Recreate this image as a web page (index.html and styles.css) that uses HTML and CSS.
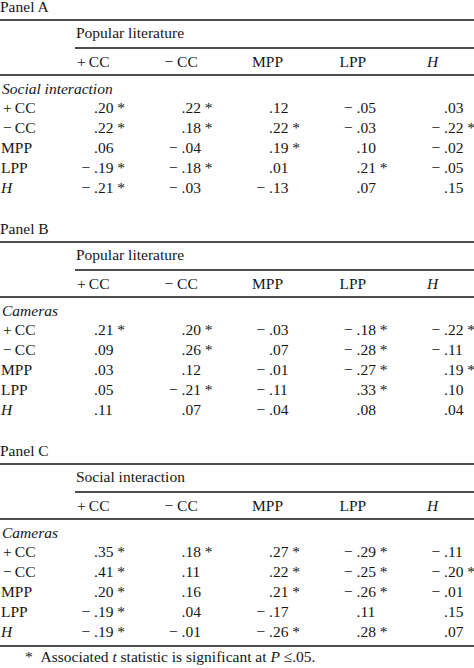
FILE: index.html
```html
<!DOCTYPE html>
<html>
<head>
<meta charset="utf-8">
<link rel="stylesheet" href="styles.css">
</head>
<body>
<section class="panel">
  <div class="panel-label">Panel A</div>
  <div class="table">
    <div class="head1"><div></div><div class="group-head">Popular literature</div></div>
    <div class="head2 grid">
      <div></div><div class="ch">+&thinsp;CC</div><div class="ch">− CC</div><div class="ch">MPP</div><div class="ch">LPP</div><div class="ch"><i>H</i></div>
    </div>
    <div class="tbody">
      <div class="group-label">Social interaction</div>
      <div class="row grid"><div class="rl pm">+&thinsp;CC</div><div class="v"><span class="s"></span><span>.20 *</span></div><div class="v"><span class="s"></span><span>.22 *</span></div><div class="v"><span class="s"></span><span>.12</span></div><div class="v"><span class="s">− </span><span>.05</span></div><div class="v"><span class="s"></span><span>.03</span></div></div>
      <div class="row grid"><div class="rl pm">−&thinsp;CC</div><div class="v"><span class="s"></span><span>.22 *</span></div><div class="v"><span class="s"></span><span>.18 *</span></div><div class="v"><span class="s"></span><span>.22 *</span></div><div class="v"><span class="s">− </span><span>.03</span></div><div class="v"><span class="s">− </span><span>.22 *</span></div></div>
      <div class="row grid"><div class="rl">MPP</div><div class="v"><span class="s"></span><span>.06</span></div><div class="v"><span class="s">− </span><span>.04</span></div><div class="v"><span class="s"></span><span>.19 *</span></div><div class="v"><span class="s"></span><span>.10</span></div><div class="v"><span class="s">− </span><span>.02</span></div></div>
      <div class="row grid"><div class="rl">LPP</div><div class="v"><span class="s">− </span><span>.19 *</span></div><div class="v"><span class="s">− </span><span>.18 *</span></div><div class="v"><span class="s"></span><span>.01</span></div><div class="v"><span class="s"></span><span>.21 *</span></div><div class="v"><span class="s">− </span><span>.05</span></div></div>
      <div class="row grid"><div class="rl"><i>H</i></div><div class="v"><span class="s">− </span><span>.21 *</span></div><div class="v"><span class="s">− </span><span>.03</span></div><div class="v"><span class="s">− </span><span>.13</span></div><div class="v"><span class="s"></span><span>.07</span></div><div class="v"><span class="s"></span><span>.15</span></div></div>
    </div>
  </div>
</section>

<section class="panel">
  <div class="panel-label">Panel B</div>
  <div class="table">
    <div class="head1"><div></div><div class="group-head">Popular literature</div></div>
    <div class="head2 grid">
      <div></div><div class="ch">+&thinsp;CC</div><div class="ch">− CC</div><div class="ch">MPP</div><div class="ch">LPP</div><div class="ch"><i>H</i></div>
    </div>
    <div class="tbody">
      <div class="group-label">Cameras</div>
      <div class="row grid"><div class="rl pm">+&thinsp;CC</div><div class="v"><span class="s"></span><span>.21 *</span></div><div class="v"><span class="s"></span><span>.20 *</span></div><div class="v"><span class="s">− </span><span>.03</span></div><div class="v"><span class="s">− </span><span>.18 *</span></div><div class="v"><span class="s">− </span><span>.22 *</span></div></div>
      <div class="row grid"><div class="rl pm">−&thinsp;CC</div><div class="v"><span class="s"></span><span>.09</span></div><div class="v"><span class="s"></span><span>.26 *</span></div><div class="v"><span class="s"></span><span>.07</span></div><div class="v"><span class="s">− </span><span>.28 *</span></div><div class="v"><span class="s">− </span><span>.11</span></div></div>
      <div class="row grid"><div class="rl">MPP</div><div class="v"><span class="s"></span><span>.03</span></div><div class="v"><span class="s"></span><span>.12</span></div><div class="v"><span class="s">− </span><span>.01</span></div><div class="v"><span class="s">− </span><span>.27 *</span></div><div class="v"><span class="s"></span><span>.19 *</span></div></div>
      <div class="row grid"><div class="rl">LPP</div><div class="v"><span class="s"></span><span>.05</span></div><div class="v"><span class="s">− </span><span>.21 *</span></div><div class="v"><span class="s">− </span><span>.11</span></div><div class="v"><span class="s"></span><span>.33 *</span></div><div class="v"><span class="s"></span><span>.10</span></div></div>
      <div class="row grid"><div class="rl"><i>H</i></div><div class="v"><span class="s"></span><span>.11</span></div><div class="v"><span class="s"></span><span>.07</span></div><div class="v"><span class="s">− </span><span>.04</span></div><div class="v"><span class="s"></span><span>.08</span></div><div class="v"><span class="s"></span><span>.04</span></div></div>
    </div>
  </div>
</section>

<section class="panel last">
  <div class="panel-label">Panel C</div>
  <div class="table">
    <div class="head1"><div></div><div class="group-head">Social interaction</div></div>
    <div class="head2 grid">
      <div></div><div class="ch">+&thinsp;CC</div><div class="ch">− CC</div><div class="ch">MPP</div><div class="ch">LPP</div><div class="ch"><i>H</i></div>
    </div>
    <div class="tbody">
      <div class="group-label">Cameras</div>
      <div class="row grid"><div class="rl pm">+&thinsp;CC</div><div class="v"><span class="s"></span><span>.35 *</span></div><div class="v"><span class="s"></span><span>.18 *</span></div><div class="v"><span class="s"></span><span>.27 *</span></div><div class="v"><span class="s">− </span><span>.29 *</span></div><div class="v"><span class="s">− </span><span>.11</span></div></div>
      <div class="row grid"><div class="rl pm">−&thinsp;CC</div><div class="v"><span class="s"></span><span>.41 *</span></div><div class="v"><span class="s"></span><span>.11</span></div><div class="v"><span class="s"></span><span>.22 *</span></div><div class="v"><span class="s">− </span><span>.25 *</span></div><div class="v"><span class="s">− </span><span>.20 *</span></div></div>
      <div class="row grid"><div class="rl">MPP</div><div class="v"><span class="s"></span><span>.20 *</span></div><div class="v"><span class="s"></span><span>.16</span></div><div class="v"><span class="s"></span><span>.21 *</span></div><div class="v"><span class="s">− </span><span>.26 *</span></div><div class="v"><span class="s">− </span><span>.01</span></div></div>
      <div class="row grid"><div class="rl">LPP</div><div class="v"><span class="s">− </span><span>.19 *</span></div><div class="v"><span class="s"></span><span>.04</span></div><div class="v"><span class="s">− </span><span>.17</span></div><div class="v"><span class="s"></span><span>.11</span></div><div class="v"><span class="s"></span><span>.15</span></div></div>
      <div class="row grid"><div class="rl"><i>H</i></div><div class="v"><span class="s">− </span><span>.19 *</span></div><div class="v"><span class="s">− </span><span>.01</span></div><div class="v"><span class="s">− </span><span>.26 *</span></div><div class="v"><span class="s"></span><span>.28 *</span></div><div class="v"><span class="s"></span><span>.07</span></div></div>
    </div>
  </div>
</section>

<p class="footnote">* &nbsp;Associated <i>t</i> statistic is significant at <i>P</i> ≤.05.</p>
</body>
</html>
```

FILE: styles.css
```css
html, body {
  margin: 0;
  padding: 0;
  background: #ffffff;
}

body {
  width: 474px;
  height: 668px;
  overflow: hidden;
  font-family: "Liberation Serif", "Times New Roman", serif;
  font-size: 15.5px;
  color: #161616;
  white-space: nowrap;
}

.panel {
  margin-bottom: 24px;
}

.panel.last {
  margin-bottom: 0;
}

.panel-label {
  line-height: 13px;
  padding-bottom: 6px;
}

.table {
  border-top: 2px solid #4f4f4f;
}

.panel.last .table {
  border-bottom: 2px solid #4f4f4f;
}

.head1 {
  display: grid;
  grid-template-columns: 75px 1fr;
  padding-top: 2px;
}

.group-head {
  line-height: 20px;
  padding: 0 0 4px 1px;
  border-bottom: 2px solid #4f4f4f;
}

.grid {
  display: grid;
  grid-template-columns: 75px repeat(5, 87.5px);
}

.head2 {
  line-height: 20px;
  padding: 3px 0 2px;
  border-bottom: 2px solid #4f4f4f;
}

.ch {
  padding-left: 2px;
}

.tbody {
  padding-top: 4px;
}

.panel.last .tbody {
  padding-bottom: 3px;
}

.group-label {
  font-style: italic;
  line-height: 18px;
  padding-left: 2px;
}

.row {
  line-height: 20px;
}

.rl {
  padding-left: 1px;
}

.rl.pm {
  padding-left: 3px;
}

.v {
  display: flex;
}

.s {
  width: 19px;
  flex: none;
  text-align: right;
  white-space: pre;
}

.footnote {
  margin: 0;
  line-height: 20px;
  padding-left: 25px;
}
```
